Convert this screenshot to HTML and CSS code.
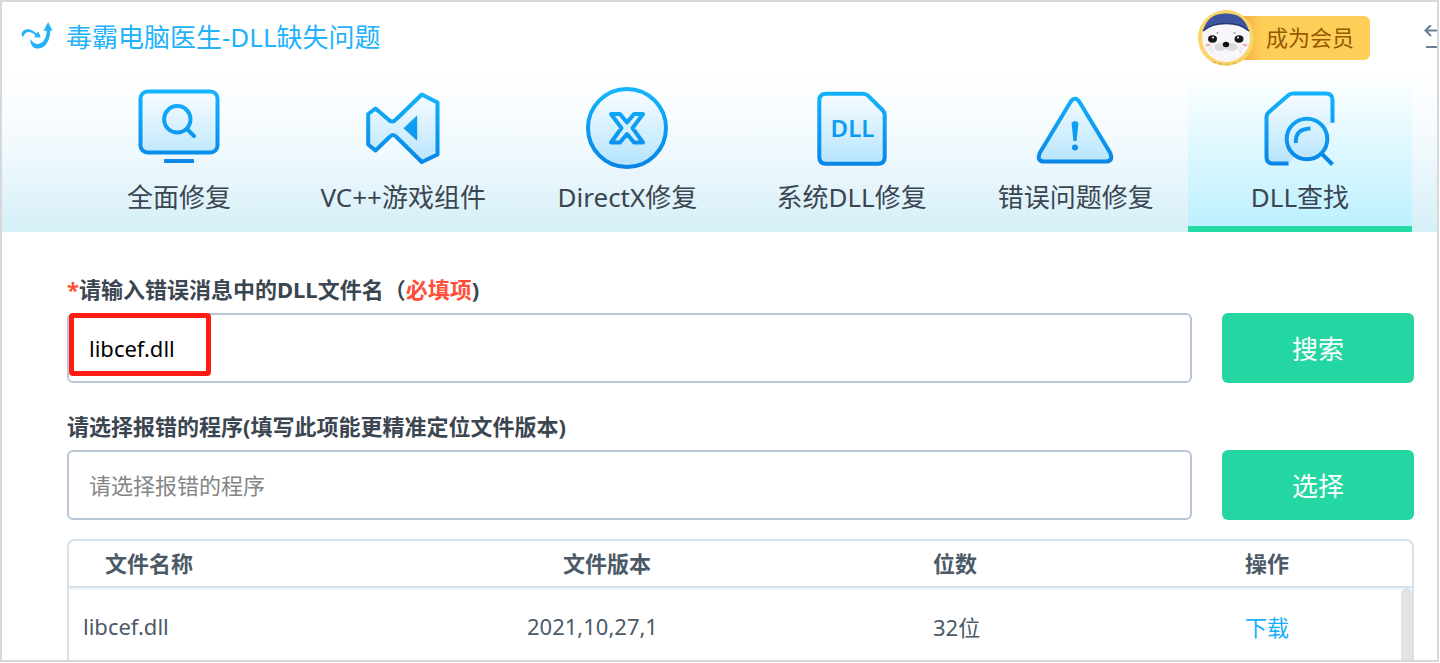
FILE: index.html
```
<!DOCTYPE html>
<html lang="zh-CN">
<head>
<meta charset="utf-8">
<title>毒霸电脑医生-DLL缺失问题</title>
<link rel="stylesheet" href="styles.css">
</head>
<body>
<div class="window">
<header class="title_bar">
<svg class="logo" viewBox="0 0 32 32">
<path d="M.5 13C1 6 9 5 15.500 11.500L17.500 9.500L19.800 15.500L12.800 15.200L14.500 13.200C9 8.500 4 9 2.500 14.500Q1 15 .5 13Z"/>
<path d="M9.500 17C8 31 29 31 29.300 8.500L31.500 9L27.200 0L22.500 9L25.600 8.500C26 21 15 27 9.500 17Z"/>
</svg>
<h1>毒霸电脑医生-DLL缺失问题</h1>
<button type="button" class="vip">
<svg class="avatar" viewBox="0 0 56 58">
<circle cx="28" cy="29" r="28" fill="#fbd468"/>
<circle cx="28" cy="29" r="24" fill="#f7f7fb"/>
<path d="M5 22C9 8 18 4.500 28 4.500S47 8 51 22C45 17 38 14.500 28 14.500S11 17 5 22Z" fill="#3d549f"/>
<path d="M5 22C11 16.500 18 14.500 28 14.500S45 16.500 51 22" fill="none" stroke="#27366f" stroke-width="1.500"/>
<ellipse cx="22.500" cy="38" rx="6" ry="4" fill="#dcdcdc"/>
<ellipse cx="33.500" cy="38" rx="6" ry="4" fill="#dcdcdc"/>
<ellipse cx="14.500" cy="30" rx="4.500" ry="3.700" fill="#17171c"/>
<ellipse cx="41" cy="30" rx="4.500" ry="3.700" fill="#17171c"/>
<ellipse cx="28" cy="35.500" rx="3.200" ry="2.700" fill="#111"/>
<circle cx="15" cy="28.500" r="1" fill="#fff"/>
<circle cx="40" cy="28.500" r="1" fill="#fff"/>
<circle cx="19.500" cy="24" r="1" fill="#999"/>
<circle cx="36.500" cy="24" r="1" fill="#999"/>
<ellipse cx="10" cy="36" rx="2.500" ry="1.500" fill="#f8b5b0"/>
<ellipse cx="47" cy="36" rx="2.500" ry="1.500" fill="#f8b5b0"/>
<path d="M11 41L14 38M12.500 44L15 40.500M45 41L42 38M43.500 44L41 40.500" stroke="#ccc" stroke-width="0.800"/>
<path d="M14 52.500Q28 58 42 52.500" fill="none" stroke="#c9a758" stroke-width="1" stroke-dasharray="4 3"/>
</svg>
<span>成为会员</span>
</button>
<button type="button" class="win_btn" aria-label="返回">
<svg viewBox="0 0 26 26"><path d="M7 0L1.500 5.500L7 11M1.500 5.500H25M2 22H25"/></svg>
</button>
</header>
<nav class="tabs">
<button type="button" class="tab">
<svg viewBox="0 0 90 90">
<defs>
<linearGradient id="line" gradientUnits="userSpaceOnUse" x1="0" y1="6" x2="0" y2="84"><stop offset="0" stop-color="#14b5fd"/><stop offset="1" stop-color="#0784e6"/></linearGradient>
<linearGradient id="fill" gradientUnits="userSpaceOnUse" x1="0" y1="8" x2="0" y2="82"><stop offset="0" stop-color="#fafdff"/><stop offset="1" stop-color="#b4e4fd"/></linearGradient>
</defs>
<rect class="shape" x="6.500" y="8.500" width="77" height="61" rx="7"/>
<circle class="line" cx="43.300" cy="36.300" r="13.200"/>
<path class="line" d="M53 46L60 53" stroke-linecap="round"/>
<rect class="solid" x="30" y="76" width="30" height="4" rx="1"/>
</svg>
<span>全面修复</span>
</button>
<button type="button" class="tab">
<svg viewBox="0 0 90 90">
<path class="shape" d="M17.500 25.500L10.200 31V61.500L17.500 67.500L31.500 54Q35 50 38.500 54L63.800 79L79.500 71.500V19.500L63.800 11.500L38.500 36Q35 40 31.500 37.500Z"/>
<path class="solid" d="M45.500 45.300L59.200 32.300V57.700Z"/>
</svg>
<span>VC++游戏组件</span>
</button>
<button type="button" class="tab">
<svg viewBox="0 0 90 90">
<circle class="shape" cx="45" cy="45" r="39"/>
<path class="line" d="M29 31H38L45 39.500L52 31H61L50.500 45L61 59.500H52L45 51L38 59.500H29L39.500 45Z"/>
</svg>
<span>DirectX修复</span>
</button>
<button type="button" class="tab">
<svg viewBox="0 0 90 90">
<path class="shape" d="M19 10.700H56Q59 10.700 61 12.700L75.500 27Q77.700 29.200 77.700 32V74Q77.700 80.700 71 80.700H19Q12.300 80.700 12.300 74V17.400Q12.300 10.700 19 10.700Z"/>
<text class="icon_text" x="45.500" y="54" text-anchor="middle">DLL</text>
</svg>
<span>系统DLL修复</span>
</button>
<button type="button" class="tab">
<svg viewBox="0 0 90 90">
<path class="shape" d="M39.500 19Q44 12.500 48.500 19L79 69.500Q83 78.500 74.500 78.500H13.500Q5 78.500 9 69.500Z"/>
<path class="solid" d="M40.500 40Q44 36 47.500 40L45.500 58H42.500Z"/>
<circle class="solid" cx="44" cy="64.500" r="3"/>
</svg>
<span>错误问题修复</span>
</button>
<button type="button" class="tab active">
<svg viewBox="0 0 90 90">
<path fill="url(#fill)" d="M71 10.500H36L12.300 32V74Q12.300 80.500 19 80.500H34L52 56L77.500 39V17Q77 10.500 71 10.500Z"/>
<path class="line" d="M77.500 39.700V17Q77.500 10.500 71 10.500H38Q35 10.500 33 12.500L14 29Q11.500 31 11.500 34V74Q11.500 80.500 18 80.500H33.500"/>
<circle class="shape" cx="52" cy="56" r="20.300"/>
<path class="line" d="M41 60Q39.500 46 55.500 45.500M67 71L77.500 81.500"/>
</svg>
<span>DLL查找</span>
</button>
</nav>
<main class="content">
<form>
<label class="field_label" for="dllName"><span class="red">*</span>请输入错误消息中的DLL文件名（<span class="red">必填项</span>)</label>
<div class="field">
<div class="input_box">
<input type="text" id="dllName" value="libcef.dll">
<div class="mark"></div>
</div>
<button type="button">搜索</button>
</div>
<label class="field_label" for="program">请选择报错的程序(填写此项能更精准定位文件版本)</label>
<div class="field">
<div class="input_box">
<input type="text" id="program" placeholder="请选择报错的程序">
</div>
<button type="button">选择</button>
</div>
</form>
<div class="result">
<table>
<thead>
<tr><th class="name">文件名称</th><th class="version">文件版本</th><th class="bits">位数</th><th>操作</th></tr>
</thead>
<tbody>
<tr><td class="name">libcef.dll</td><td>2021,10,27,1</td><td>32位</td><td><a href="#">下载</a></td></tr>
</tbody>
</table>
<div class="scroll_bar"></div>
</div>
</main>
</div>
</body>
</html>
```
FILE: styles.css
```
* {
  box-sizing: border-box;
}
body {
  margin: 0;
  padding: 0 1px 1px 0;
  height: 100vh;
  background: #fff;
  color: #3b4651;
  font-family: "Noto Sans", "Noto Sans CJK SC", sans-serif;
  font-size: 22px;
}
button, input {
  font-family: inherit;
}
button {
  border: none;
  padding: 0;
  background: none;
  cursor: pointer;
}
svg {
  display: block;
  flex: none;
}
.window {
  display: flex;
  flex-direction: column;
  height: 100%;
  border: 2px solid #d8d8d8;
  overflow: hidden;
}

/* title bar */
.title_bar {
  display: flex;
  align-items: center;
  flex: none;
  height: 72px;
  padding-left: 19px;
}
.logo {
  width: 32px;
  height: 32px;
  fill: #22b2fb;
}
.title_bar h1 {
  margin: 0 auto 0 13px;
  padding-bottom: 2px;
  font-size: 26px;
  line-height: 38px;
  font-weight: 400;
  color: #22b2fb;
}
.vip {
  display: flex;
  align-items: center;
}
.avatar {
  position: relative;
  width: 56px;
  height: 58px;
}
.vip span {
  margin-left: -16px;
  padding: 0 16px 2px 28px;
  border-radius: 6px;
  background: linear-gradient(90deg, #f5a63c, #fecf58 24px);
  color: #975800;
  font-size: 22px;
  line-height: 42px;
}
.win_btn {
  width: 13px;
  margin-left: 54px;
  overflow: hidden;
}
.win_btn svg {
  width: 26px;
  height: 26px;
  fill: none;
  stroke: #66809a;
  stroke-width: 2;
}

/* tabs */
.tabs {
  display: grid;
  grid-template-columns: repeat(6, 1fr);
  flex: none;
  padding: 9px 25px 0 65px;
  background: linear-gradient(#fff, #f0f9fe 50%, #d5eff7);
}
.tab {
  display: flex;
  flex-direction: column;
  align-items: center;
  gap: 5px;
  padding-bottom: 10px;
  border-bottom: 6px solid transparent;
  color: #3b4651;
  font-size: 26px;
  line-height: 38px;
  font-weight: 400;
}
.tab.active {
  background: linear-gradient(#fafeff, #bdf0ff);
  border-bottom-color: #24dba6;
}
.tab svg {
  width: 90px;
  height: 90px;
  stroke-width: 4;
  stroke-linejoin: round;
}
.shape {
  fill: url(#fill);
  stroke: url(#line);
}
.line {
  fill: none;
  stroke: url(#line);
}
.solid {
  fill: url(#line);
}
.icon_text {
  fill: url(#line);
  font-size: 24px;
  font-weight: 600;
}

/* search form */
.content {
  display: flex;
  flex-direction: column;
  flex: 1;
  min-height: 0;
  padding: 14px 23px 0 65px;
}
.field_label {
  display: block;
  margin: 29px 0 10px;
  font-weight: bold;
  line-height: 28px;
}
.red {
  color: #ff4f38;
}
.field {
  display: flex;
  gap: 30px;
}
.input_box {
  position: relative;
  flex: 1;
}
.input_box input {
  display: block;
  width: 100%;
  height: 70px;
  padding: 0 20px;
  border: 2px solid #b8c6d6;
  border-radius: 6px;
  background: #fff;
  color: #000;
  font-size: 22px;
}
.input_box input::placeholder {
  color: #858585;
}
.mark {
  position: absolute;
  top: 0;
  left: 2px;
  width: 142px;
  height: 63px;
  border: 5px solid #ff1c12;
  border-radius: 4px;
  pointer-events: none;
}
.field button {
  width: 192px;
  border-radius: 6px;
  background: #24d7a2;
  color: #fff;
  font-size: 26px;
}

/* result table */
.result {
  position: relative;
  flex: 1;
  min-height: 0;
  margin-top: 19px;
  border: 2px solid #d5e1ee;
  border-bottom: none;
  border-radius: 8px 8px 0 0;
  overflow: hidden;
}
.result table {
  width: 100%;
  table-layout: fixed;
  border-collapse: separate;
  border-spacing: 0;
  color: #4c5a68;
}
.result th, .result td {
  padding: 0;
  text-align: left;
}
.result th {
  height: 47px;
  padding-bottom: 3px;
  border-bottom: 2px solid #d5e1ee;
}
.result td {
  height: 74px;
  border-top: 2px solid #f6f7f8;
}
.result .name {
  width: 458px;
}
.result .version {
  width: 406px;
}
.result .bits {
  width: 312px;
}
.result th.name, .result th.version {
  padding-left: 36px;
}
.result td.name {
  padding-left: 14px;
}
.result a {
  color: #14aefc;
  text-decoration: none;
}
.scroll_bar {
  position: absolute;
  top: 47px;
  right: 0;
  bottom: 0;
  width: 11px;
  border-radius: 6px 6px 0 0;
  background: #e3e3e3;
}
```
